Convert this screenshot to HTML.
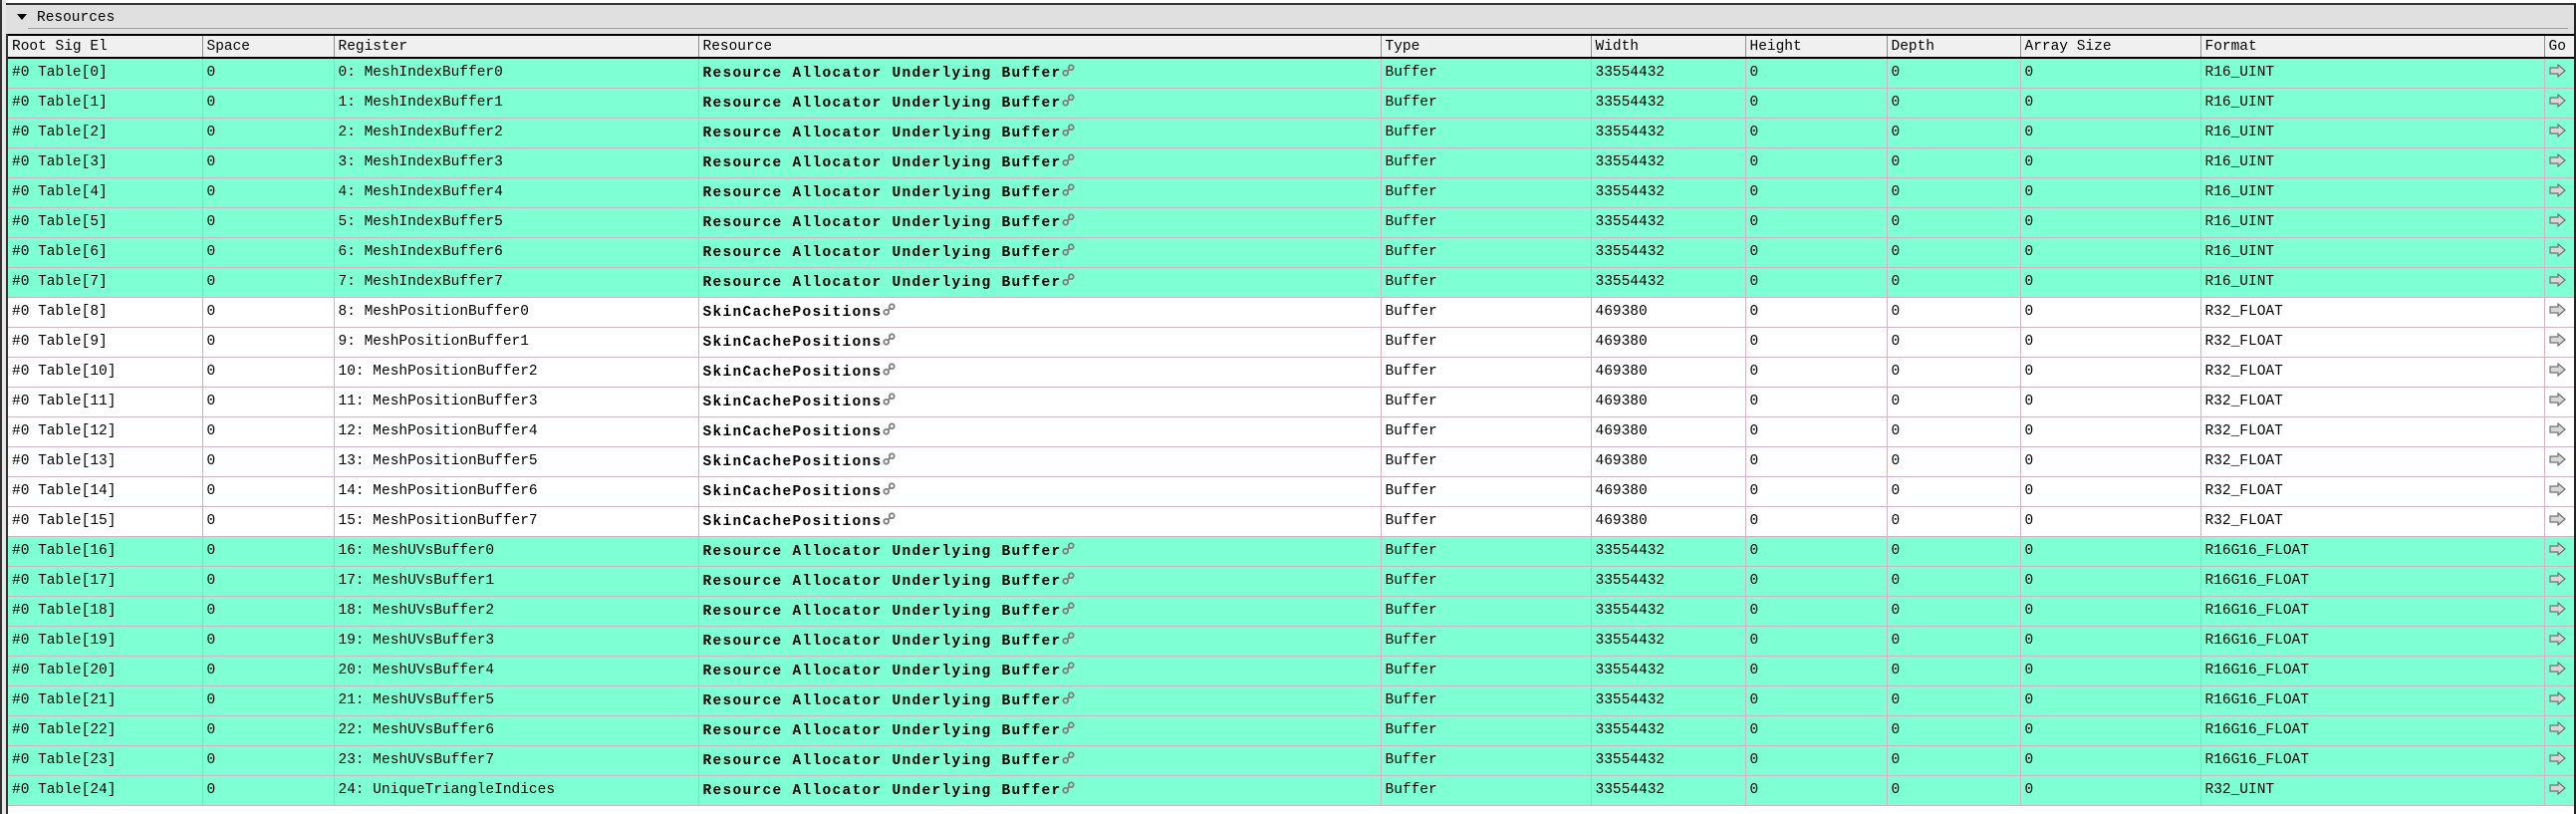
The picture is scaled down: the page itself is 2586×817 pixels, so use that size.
<!DOCTYPE html>
<html><head><meta charset="utf-8"><style>
*{margin:0;padding:0;box-sizing:border-box}
body{width:2586px;height:817px;background:#fff;position:relative;overflow:hidden;font-family:"Liberation Mono","Noto Sans CJK SC",monospace;font-size:14.5px;color:#000}
.lb1{position:absolute;left:0;top:0;width:2px;height:817px;background:#333}
.lb2{position:absolute;left:6px;top:4px;width:2px;height:813px;background:#333}
.lbg{position:absolute;left:2px;top:0;width:4px;height:817px;background:#e8e8e8}
.rb{position:absolute;left:2584px;top:4px;width:2px;height:813px;background:#222}
.title{position:absolute;left:6px;top:3px;width:2580px;height:31px;background:#e0e0e0;border-top:2px solid #333}
.tri{position:absolute;left:11px;top:9px;width:0;height:0;border-left:5px solid transparent;border-right:5px solid transparent;border-top:6px solid #000}
.ttxt{position:absolute;left:31px;top:5px;font-size:14.5px}
.uline{position:absolute;left:22px;top:23px;width:2550px;height:1px;background:#a0a0a0}
table{position:absolute;left:8px;top:34px;border-collapse:collapse;table-layout:fixed;width:2576px}
td,th{height:30px;padding:0 0 0 4px;white-space:nowrap;overflow:hidden;text-align:left;font-weight:normal;border-right:1px solid #d0b4c4;border-bottom:1px solid #d0b4c4}
th{height:23px;background:#f0f0f0;border-top:2px solid #000;border-bottom:2px solid #000;border-right:1px solid #909090}
tr.g td{background:#7fffd4}
td.b{font-weight:bold;letter-spacing:1.3px}
td.go{padding:0 0 0 4px}
</style></head><body>
<div class="lb1"></div><div class="lbg"></div><div class="lb2"></div>
<div class="title"><div class="tri"></div><div class="ttxt">Resources</div><div class="uline"></div></div>
<table>
<colgroup><col style="width:195px"><col style="width:132px"><col style="width:366px"><col style="width:685px"><col style="width:211px"><col style="width:155px"><col style="width:142px"><col style="width:134px"><col style="width:181px"><col style="width:345px"><col style="width:30px"></colgroup>
<tr><th>Root Sig El</th><th>Space</th><th>Register</th><th>Resource</th><th>Type</th><th>Width</th><th>Height</th><th>Depth</th><th>Array Size</th><th>Format</th><th>Go</th></tr>
<svg width="0" height="0" style="position:absolute"><defs>
<symbol id="lk" viewBox="0 0 14 14"><g fill="none" stroke="#808080" stroke-width="2"><circle cx="4" cy="10" r="2.6"/><circle cx="10" cy="4" r="2.6"/><line x1="5.5" y1="8.5" x2="8.5" y2="5.5"/></g></symbol>
<symbol id="ar" viewBox="0 0 18 14"><polygon points="1,4 9,4 9,1 16,7 9,13 9,10 1,10" fill="#d8d8d8" stroke="#707070" stroke-width="1.2"/></symbol>
</defs></svg>
<tbody>
<tr class="g"><td>#0 Table[0]</td><td>0</td><td>0: MeshIndexBuffer0</td><td class="b">Resource Allocator Underlying Buffer<svg width="13" height="13"><use href="#lk"/></svg></td><td>Buffer</td><td>33554432</td><td>0</td><td>0</td><td>0</td><td>R16_UINT</td><td class="go"><svg width="18" height="14"><use href="#ar"/></svg></td></tr>
<tr class="g"><td>#0 Table[1]</td><td>0</td><td>1: MeshIndexBuffer1</td><td class="b">Resource Allocator Underlying Buffer<svg width="13" height="13"><use href="#lk"/></svg></td><td>Buffer</td><td>33554432</td><td>0</td><td>0</td><td>0</td><td>R16_UINT</td><td class="go"><svg width="18" height="14"><use href="#ar"/></svg></td></tr>
<tr class="g"><td>#0 Table[2]</td><td>0</td><td>2: MeshIndexBuffer2</td><td class="b">Resource Allocator Underlying Buffer<svg width="13" height="13"><use href="#lk"/></svg></td><td>Buffer</td><td>33554432</td><td>0</td><td>0</td><td>0</td><td>R16_UINT</td><td class="go"><svg width="18" height="14"><use href="#ar"/></svg></td></tr>
<tr class="g"><td>#0 Table[3]</td><td>0</td><td>3: MeshIndexBuffer3</td><td class="b">Resource Allocator Underlying Buffer<svg width="13" height="13"><use href="#lk"/></svg></td><td>Buffer</td><td>33554432</td><td>0</td><td>0</td><td>0</td><td>R16_UINT</td><td class="go"><svg width="18" height="14"><use href="#ar"/></svg></td></tr>
<tr class="g"><td>#0 Table[4]</td><td>0</td><td>4: MeshIndexBuffer4</td><td class="b">Resource Allocator Underlying Buffer<svg width="13" height="13"><use href="#lk"/></svg></td><td>Buffer</td><td>33554432</td><td>0</td><td>0</td><td>0</td><td>R16_UINT</td><td class="go"><svg width="18" height="14"><use href="#ar"/></svg></td></tr>
<tr class="g"><td>#0 Table[5]</td><td>0</td><td>5: MeshIndexBuffer5</td><td class="b">Resource Allocator Underlying Buffer<svg width="13" height="13"><use href="#lk"/></svg></td><td>Buffer</td><td>33554432</td><td>0</td><td>0</td><td>0</td><td>R16_UINT</td><td class="go"><svg width="18" height="14"><use href="#ar"/></svg></td></tr>
<tr class="g"><td>#0 Table[6]</td><td>0</td><td>6: MeshIndexBuffer6</td><td class="b">Resource Allocator Underlying Buffer<svg width="13" height="13"><use href="#lk"/></svg></td><td>Buffer</td><td>33554432</td><td>0</td><td>0</td><td>0</td><td>R16_UINT</td><td class="go"><svg width="18" height="14"><use href="#ar"/></svg></td></tr>
<tr class="g"><td>#0 Table[7]</td><td>0</td><td>7: MeshIndexBuffer7</td><td class="b">Resource Allocator Underlying Buffer<svg width="13" height="13"><use href="#lk"/></svg></td><td>Buffer</td><td>33554432</td><td>0</td><td>0</td><td>0</td><td>R16_UINT</td><td class="go"><svg width="18" height="14"><use href="#ar"/></svg></td></tr>
<tr><td>#0 Table[8]</td><td>0</td><td>8: MeshPositionBuffer0</td><td class="b">SkinCachePositions<svg width="13" height="13"><use href="#lk"/></svg></td><td>Buffer</td><td>469380</td><td>0</td><td>0</td><td>0</td><td>R32_FLOAT</td><td class="go"><svg width="18" height="14"><use href="#ar"/></svg></td></tr>
<tr><td>#0 Table[9]</td><td>0</td><td>9: MeshPositionBuffer1</td><td class="b">SkinCachePositions<svg width="13" height="13"><use href="#lk"/></svg></td><td>Buffer</td><td>469380</td><td>0</td><td>0</td><td>0</td><td>R32_FLOAT</td><td class="go"><svg width="18" height="14"><use href="#ar"/></svg></td></tr>
<tr><td>#0 Table[10]</td><td>0</td><td>10: MeshPositionBuffer2</td><td class="b">SkinCachePositions<svg width="13" height="13"><use href="#lk"/></svg></td><td>Buffer</td><td>469380</td><td>0</td><td>0</td><td>0</td><td>R32_FLOAT</td><td class="go"><svg width="18" height="14"><use href="#ar"/></svg></td></tr>
<tr><td>#0 Table[11]</td><td>0</td><td>11: MeshPositionBuffer3</td><td class="b">SkinCachePositions<svg width="13" height="13"><use href="#lk"/></svg></td><td>Buffer</td><td>469380</td><td>0</td><td>0</td><td>0</td><td>R32_FLOAT</td><td class="go"><svg width="18" height="14"><use href="#ar"/></svg></td></tr>
<tr><td>#0 Table[12]</td><td>0</td><td>12: MeshPositionBuffer4</td><td class="b">SkinCachePositions<svg width="13" height="13"><use href="#lk"/></svg></td><td>Buffer</td><td>469380</td><td>0</td><td>0</td><td>0</td><td>R32_FLOAT</td><td class="go"><svg width="18" height="14"><use href="#ar"/></svg></td></tr>
<tr><td>#0 Table[13]</td><td>0</td><td>13: MeshPositionBuffer5</td><td class="b">SkinCachePositions<svg width="13" height="13"><use href="#lk"/></svg></td><td>Buffer</td><td>469380</td><td>0</td><td>0</td><td>0</td><td>R32_FLOAT</td><td class="go"><svg width="18" height="14"><use href="#ar"/></svg></td></tr>
<tr><td>#0 Table[14]</td><td>0</td><td>14: MeshPositionBuffer6</td><td class="b">SkinCachePositions<svg width="13" height="13"><use href="#lk"/></svg></td><td>Buffer</td><td>469380</td><td>0</td><td>0</td><td>0</td><td>R32_FLOAT</td><td class="go"><svg width="18" height="14"><use href="#ar"/></svg></td></tr>
<tr><td>#0 Table[15]</td><td>0</td><td>15: MeshPositionBuffer7</td><td class="b">SkinCachePositions<svg width="13" height="13"><use href="#lk"/></svg></td><td>Buffer</td><td>469380</td><td>0</td><td>0</td><td>0</td><td>R32_FLOAT</td><td class="go"><svg width="18" height="14"><use href="#ar"/></svg></td></tr>
<tr class="g"><td>#0 Table[16]</td><td>0</td><td>16: MeshUVsBuffer0</td><td class="b">Resource Allocator Underlying Buffer<svg width="13" height="13"><use href="#lk"/></svg></td><td>Buffer</td><td>33554432</td><td>0</td><td>0</td><td>0</td><td>R16G16_FLOAT</td><td class="go"><svg width="18" height="14"><use href="#ar"/></svg></td></tr>
<tr class="g"><td>#0 Table[17]</td><td>0</td><td>17: MeshUVsBuffer1</td><td class="b">Resource Allocator Underlying Buffer<svg width="13" height="13"><use href="#lk"/></svg></td><td>Buffer</td><td>33554432</td><td>0</td><td>0</td><td>0</td><td>R16G16_FLOAT</td><td class="go"><svg width="18" height="14"><use href="#ar"/></svg></td></tr>
<tr class="g"><td>#0 Table[18]</td><td>0</td><td>18: MeshUVsBuffer2</td><td class="b">Resource Allocator Underlying Buffer<svg width="13" height="13"><use href="#lk"/></svg></td><td>Buffer</td><td>33554432</td><td>0</td><td>0</td><td>0</td><td>R16G16_FLOAT</td><td class="go"><svg width="18" height="14"><use href="#ar"/></svg></td></tr>
<tr class="g"><td>#0 Table[19]</td><td>0</td><td>19: MeshUVsBuffer3</td><td class="b">Resource Allocator Underlying Buffer<svg width="13" height="13"><use href="#lk"/></svg></td><td>Buffer</td><td>33554432</td><td>0</td><td>0</td><td>0</td><td>R16G16_FLOAT</td><td class="go"><svg width="18" height="14"><use href="#ar"/></svg></td></tr>
<tr class="g"><td>#0 Table[20]</td><td>0</td><td>20: MeshUVsBuffer4</td><td class="b">Resource Allocator Underlying Buffer<svg width="13" height="13"><use href="#lk"/></svg></td><td>Buffer</td><td>33554432</td><td>0</td><td>0</td><td>0</td><td>R16G16_FLOAT</td><td class="go"><svg width="18" height="14"><use href="#ar"/></svg></td></tr>
<tr class="g"><td>#0 Table[21]</td><td>0</td><td>21: MeshUVsBuffer5</td><td class="b">Resource Allocator Underlying Buffer<svg width="13" height="13"><use href="#lk"/></svg></td><td>Buffer</td><td>33554432</td><td>0</td><td>0</td><td>0</td><td>R16G16_FLOAT</td><td class="go"><svg width="18" height="14"><use href="#ar"/></svg></td></tr>
<tr class="g"><td>#0 Table[22]</td><td>0</td><td>22: MeshUVsBuffer6</td><td class="b">Resource Allocator Underlying Buffer<svg width="13" height="13"><use href="#lk"/></svg></td><td>Buffer</td><td>33554432</td><td>0</td><td>0</td><td>0</td><td>R16G16_FLOAT</td><td class="go"><svg width="18" height="14"><use href="#ar"/></svg></td></tr>
<tr class="g"><td>#0 Table[23]</td><td>0</td><td>23: MeshUVsBuffer7</td><td class="b">Resource Allocator Underlying Buffer<svg width="13" height="13"><use href="#lk"/></svg></td><td>Buffer</td><td>33554432</td><td>0</td><td>0</td><td>0</td><td>R16G16_FLOAT</td><td class="go"><svg width="18" height="14"><use href="#ar"/></svg></td></tr>
<tr class="g"><td>#0 Table[24]</td><td>0</td><td>24: UniqueTriangleIndices</td><td class="b">Resource Allocator Underlying Buffer<svg width="13" height="13"><use href="#lk"/></svg></td><td>Buffer</td><td>33554432</td><td>0</td><td>0</td><td>0</td><td>R32_UINT</td><td class="go"><svg width="18" height="14"><use href="#ar"/></svg></td></tr>
</tbody></table>
<div class="rb"></div>
</body></html>
